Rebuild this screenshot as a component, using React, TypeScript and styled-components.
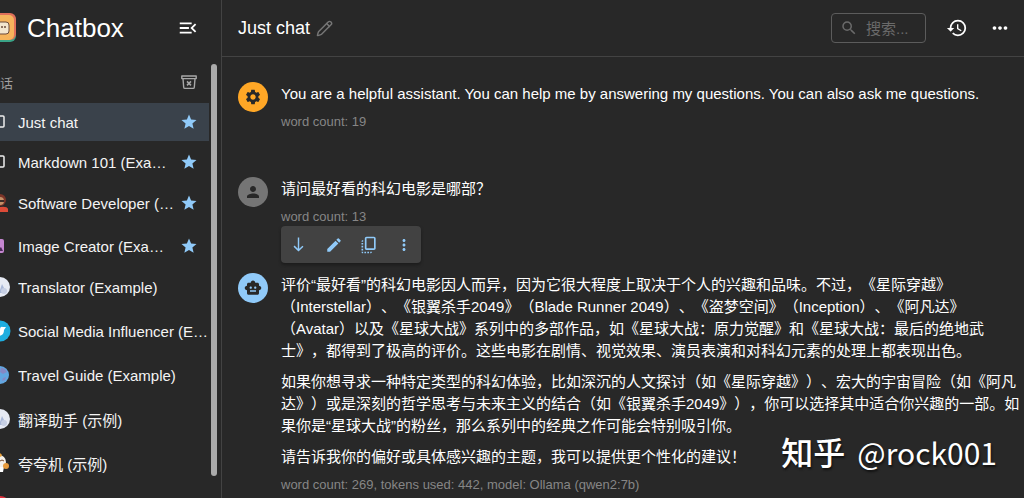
import React from 'react';
import styled, { createGlobalStyle } from 'styled-components';
import { Pencil } from 'lucide-react';
import {
  MdMenuOpen, MdStar, MdSearch, MdHistory, MdMoreHoriz, MdMoreVert, MdEdit,
  MdSouth, MdCopyAll, MdSettings, MdPerson, MdSmartToy,
} from 'react-icons/md';

const GlobalStyle = createGlobalStyle`
  * { box-sizing: border-box; }
  html, body, #root { height: 100%; }
  body {
    margin: 0;
    overflow: hidden;
    background: #282828;
    color: #fff;
    font-family: "Liberation Sans", "Noto Sans CJK SC", sans-serif;
    font-size: 15px;
    text-spacing-trim: space-all;
  }
  p, h1, h2, ul { margin: 0; padding: 0; font-weight: 400; }
`;

const Shell = styled.div`
  display: flex;
  height: 100%;
  overflow: hidden;
`;

const Sidebar = styled.aside`
  display: flex;
  flex-direction: column;
  flex: 0 0 222px;
  overflow: hidden;
  border-right: 1px solid #434343;
`;

const Brand = styled.header`
  display: flex;
  align-items: center;
  flex: 0 0 56px;
  padding-right: 22px;
`;

const BrandName = styled.h1`
  flex: 1;
  margin-left: 11px;
  font-size: 26px;
  line-height: 32px;
`;

const IconButton = styled.button<{ $color?: string }>`
  display: flex;
  align-items: center;
  justify-content: center;
  padding: 0;
  border: 0;
  background: none;
  color: ${(p) => p.$color ?? '#fff'};
`;

const SidebarBody = styled.div`
  display: flex;
  flex: 1;
  min-height: 0;
`;

const SessionPane = styled.nav`
  flex: 1;
  min-width: 0;
  padding-top: 6px;
`;

const PaneHeading = styled.div`
  display: flex;
  align-items: center;
  justify-content: space-between;
  height: 40px;
  padding-right: 12px;
  color: #a0a0a0;
  font-size: 13px;
`;

const SessionList = styled.ul`
  list-style: none;
`;

const SessionLink = styled.a<{ $active?: boolean; $tall?: boolean; $starred?: boolean }>`
  display: flex;
  align-items: center;
  height: ${(p) => (p.$tall ? 44 : 40)}px;
  padding: 0 ${(p) => (p.$starred ? 10 : 0)}px ${(p) => (p.$tall ? 2 : 0)}px 0;
  border: solid transparent;
  border-width: 1px 0;
  background: ${(p) => (p.$active ? '#3a424b' : 'transparent')};
  background-clip: padding-box;
  color: #f4f4f4;
  text-decoration: none;
`;

const SessionIcon = styled.span`
  display: flex;
  flex: 0 0 22px;
  justify-content: center;
  margin: 0 7px 0 -11px;
`;

const SessionName = styled.span`
  flex: 1;
  overflow: hidden;
  white-space: nowrap;
  text-overflow: ellipsis;
`;

const StarSlot = styled.span`
  display: flex;
  justify-content: center;
  flex: 0 0 20px;
  margin-left: 4px;
  color: #90caf9;
`;

const ScrollTrack = styled.div`
  display: flex;
  flex: 0 0 12px;
  padding: 8px 4px 22px 2px;
`;

const ScrollThumb = styled.div`
  flex: 1;
  border-radius: 3px;
  background: #aaa;
`;

const Main = styled.main`
  display: flex;
  flex-direction: column;
  flex: 1;
  min-width: 0;
`;

const TopBar = styled.header`
  display: flex;
  align-items: center;
  flex: 0 0 57px;
  padding: 0 13px 0 16px;
  border-bottom: 1px solid #434343;
`;

const ChatTitle = styled.h2`
  margin-right: 6px;
  font-size: 18px;
  line-height: 24px;
`;

const Spacer = styled.div`
  flex: 1;
`;

const SearchBox = styled.label`
  display: flex;
  align-items: center;
  gap: 8px;
  width: 95px;
  height: 30px;
  margin-right: 20px;
  padding: 0 8px;
  border: 1px solid #5c5c5c;
  border-radius: 4px;
  color: #6a6a6a;
`;

const SearchInput = styled.input`
  flex: 1;
  min-width: 0;
  padding: 0;
  border: 0;
  outline: 0;
  background: none;
  color: #fff;
  font: inherit;
  &::placeholder { color: #6a6a6a; opacity: 1; }
`;

const TopActions = styled.div`
  display: flex;
  gap: 21px;
`;

const Thread = styled.div`
  flex: 1;
  min-height: 0;
  padding: 25px 4px 0 16px;
`;

const Message = styled.article<{ $gap?: number }>`
  display: flex;
  gap: 13px;
  margin-bottom: ${(p) => p.$gap ?? 0}px;
`;

const Avatar = styled.div<{ $bg: string }>`
  display: flex;
  align-items: center;
  justify-content: center;
  flex: 0 0 30px;
  height: 30px;
  border-radius: 50%;
  background: ${(p) => p.$bg};
  color: #282828;
`;

const MessageBody = styled.div`
  flex: 1;
  min-width: 0;
  padding-top: 1px;
`;

const Paragraph = styled.p`
  margin-bottom: 9px;
  line-height: 22px;
  white-space: nowrap;
`;

const Meta = styled.div`
  margin-top: -1px;
  color: #868686;
  font-size: 13px;
  line-height: 18px;
`;

const Toolbar = styled.div`
  display: inline-flex;
  align-items: center;
  width: 140px;
  height: 37px;
  border-radius: 4px;
  background: #424242;
  box-shadow: 0 2px 3px #1c1c1c;
`;

const ToolButton = styled(IconButton)`
  flex: 1;
`;

const Watermark = styled.div`
  position: absolute;
  right: 27px;
  bottom: 24px;
  display: flex;
  align-items: baseline;
  gap: 12px;
  font-family: "Noto Sans CJK SC", sans-serif;
  font-size: 30px;
  line-height: 44px;
  text-shadow: 1px 2px 2px #111;
`;

const SiteName = styled.span`
  font-size: 32px;
  font-weight: 500;
`;

function BrandLogo() {
  return (
    <svg width="16" height="30" viewBox="14 0 16 30" aria-hidden="true">
      <rect x="0" y="1" width="30" height="28" rx="6" fill="#3aa387" />
      <rect x="0" y="0" width="30" height="27" rx="6" fill="#e0705a" />
      <rect x="0" y="2" width="28" height="25" rx="5" fill="#f6b45c" />
      <rect x="4" y="9" width="19" height="12" rx="3" fill="#f3e6cf" stroke="#6b4b3c" />
      <circle cx="16" cy="14" r="1" fill="#6b4b3c" />
      <circle cx="19" cy="14" r="1" fill="#6b4b3c" />
    </svg>
  );
}

function ArchiveIcon() {
  return (
    <svg width="16" height="16" viewBox="0 0 16 16" fill="none" stroke="#a8a8a8" strokeWidth="1.4" strokeLinejoin="round" aria-hidden="true">
      <path d="M.8 2h14.4v2.6H.8zM2 4.8l.7 8.4q.1 1.2 1.2 1.2h8.2q1.1 0 1.2-1.2l.7-8.4" />
      <path d="M6 7.4l4 4M10 7.4l-4 4" strokeWidth="1.5" />
    </svg>
  );
}

type IconKind = 'chat' | 'dev' | 'image' | 'translate' | 'bird' | 'globe' | 'cheer' | 'red';

function SessionGlyph({ kind }: { kind: IconKind }) {
  return (
    <svg width="22" height="22" viewBox="0 0 22 22" aria-hidden="true">
      {kind === 'chat' && (
        <path d="M3 6q0-1 1-1h10q1 0 1 1v9q0 1-1 1H6l-3 3z" fill="none" stroke="#eee" strokeWidth="1.5" />
      )}
      {kind === 'dev' && (
        <>
          <circle cx="11" cy="8" r="6" fill="#7c3428" />
          <circle cx="11" cy="9" r="4" fill="#c49068" />
          <path d="M8 8h7v2H8z" fill="#3c2c28" />
          <path d="M3 20q1-5 8-5 7-1 8 2v3z" fill="#dc4b38" />
        </>
      )}
      {kind === 'image' && (
        <>
          <rect x="1" y="4" width="14" height="14" rx="2" fill="#c486d0" />
          <path d="M3 16l4-5 3 3 2-2 2 4z" fill="#4b2858" />
        </>
      )}
      {kind === 'translate' && (
        <>
          <circle cx="11" cy="11" r="10" fill="#e6eaf4" />
          <path d="M10 17l3-9 3 6v3z" fill="#a9b8d8" />
          <circle cx="15" cy="15" r="3" fill="#c6cfe4" />
        </>
      )}
      {kind === 'bird' && (
        <>
          <circle cx="11" cy="11" r="10.5" fill="#1eaee0" />
          <path d="M5 8q3 3 6 2 0-4 3-3l3 0-2 3q0 6-6 6-3 0-5-2 2 0 3-1-2-2-2-5z" fill="#fff" />
        </>
      )}
      {kind === 'globe' && (
        <>
          <circle cx="11" cy="11" r="9" fill="#62a6e0" />
          <path d="M12 4q4 0 6 4l-4 2-3-2zM14 14l3-1-1 3-3 1z" fill="#8588c4" />
        </>
      )}
      {kind === 'cheer' && (
        <>
          <circle cx="10" cy="10" r="7" fill="#f4f0ea" />
          <path d="M10 2q1-2 3 1l-1 2-2-1z" fill="#e8a13a" />
          <path d="M11 9q2-2 4 0" stroke="#7a4a2a" fill="none" />
          <path d="M6 15h9l-1 5H6z" fill="#fff" />
          <circle cx="17" cy="14" r="3" fill="#e79a3c" />
        </>
      )}
      {kind === 'red' && <circle cx="11" cy="11" r="11" fill="#e0303c" />}
    </svg>
  );
}

const sessions: { name: string; kind: IconKind; starred?: boolean; active?: boolean; tall?: boolean }[] = [
  { name: 'Just chat', kind: 'chat', starred: true, active: true },
  { name: 'Markdown 101 (Example)', kind: 'chat', starred: true },
  { name: 'Software Developer (Example)', kind: 'dev', starred: true, tall: true },
  { name: 'Image Creator (Example)', kind: 'image', starred: true },
  { name: 'Translator (Example)', kind: 'translate', tall: true },
  { name: 'Social Media Influencer (Example)', kind: 'bird', tall: true },
  { name: 'Travel Guide (Example)', kind: 'globe', tall: true },
  { name: '翻译助手 (示例)', kind: 'translate', tall: true },
  { name: '夸夸机 (示例)', kind: 'cheer', tall: true },
  { name: '', kind: 'red', tall: true },
];

const reply = [
  [
    '评价“最好看”的科幻电影因人而异，因为它很大程度上取决于个人的兴趣和品味。不过，《星际穿越》',
    '（Interstellar）、《银翼杀手2049》（Blade Runner 2049）、《盗梦空间》（Inception）、《阿凡达》',
    '（Avatar）以及《星球大战》系列中的多部作品，如《星球大战：原力觉醒》和《星球大战：最后的绝地武',
    '士》，都得到了极高的评价。这些电影在剧情、视觉效果、演员表演和对科幻元素的处理上都表现出色。',
  ],
  [
    '如果你想寻求一种特定类型的科幻体验，比如深沉的人文探讨（如《星际穿越》）、宏大的宇宙冒险（如《阿凡',
    '达》）或是深刻的哲学思考与未来主义的结合（如《银翼杀手2049》），你可以选择其中适合你兴趣的一部。如',
    '果你是“星球大战”的粉丝，那么系列中的经典之作可能会特别吸引你。',
  ],
  ['请告诉我你的偏好或具体感兴趣的主题，我可以提供更个性化的建议！'],
];

export default function App() {
  return (
    <>
      <GlobalStyle />
      <Shell>
        <Sidebar>
          <Brand>
            <BrandLogo />
            <BrandName>Chatbox</BrandName>
            <IconButton aria-label="Collapse sidebar"><MdMenuOpen size={22} /></IconButton>
          </Brand>
          <SidebarBody>
            <SessionPane>
              <PaneHeading>
                <span>话</span>
                <IconButton aria-label="Archive"><ArchiveIcon /></IconButton>
              </PaneHeading>
              <SessionList>
                {sessions.map((s) => (
                  <li key={s.kind + s.name}>
                    <SessionLink href="#" $active={s.active} $tall={s.tall} $starred={s.starred}>
                      <SessionIcon><SessionGlyph kind={s.kind} /></SessionIcon>
                      <SessionName>{s.name}</SessionName>
                      {s.starred && <StarSlot><MdStar size={18} /></StarSlot>}
                    </SessionLink>
                  </li>
                ))}
              </SessionList>
            </SessionPane>
            <ScrollTrack><ScrollThumb /></ScrollTrack>
          </SidebarBody>
        </Sidebar>
        <Main>
          <TopBar>
            <ChatTitle>Just chat</ChatTitle>
            <IconButton aria-label="Rename" $color="#777"><Pencil size={17} strokeWidth={2} /></IconButton>
            <Spacer />
            <SearchBox>
              <MdSearch size={18} />
              <SearchInput aria-label="搜索" placeholder="搜索..." />
            </SearchBox>
            <TopActions>
              <IconButton aria-label="History"><MdHistory size={22} /></IconButton>
              <IconButton aria-label="More"><MdMoreHoriz size={22} /></IconButton>
            </TopActions>
          </TopBar>
          <Thread>
            <Message $gap={46}>
              <Avatar $bg="#ffa726"><MdSettings size={18} /></Avatar>
              <MessageBody>
                <Paragraph>You are a helpful assistant. You can help me by answering my questions. You can also ask me questions.</Paragraph>
                <Meta>word count: 19</Meta>
              </MessageBody>
            </Message>
            <Message $gap={10}>
              <Avatar $bg="#757575"><MdPerson size={18} /></Avatar>
              <MessageBody>
                <Paragraph>请问最好看的科幻电影是哪部？</Paragraph>
                <Meta>word count: 13</Meta>
                <Toolbar>
                  <ToolButton $color="#90caf9" aria-label="Scroll down"><MdSouth size={17} /></ToolButton>
                  <ToolButton $color="#90caf9" aria-label="Edit"><MdEdit size={18} /></ToolButton>
                  <ToolButton $color="#90caf9" aria-label="Copy"><MdCopyAll size={20} /></ToolButton>
                  <ToolButton $color="#90caf9" aria-label="More actions"><MdMoreVert size={18} /></ToolButton>
                </Toolbar>
              </MessageBody>
            </Message>
            <Message>
              <Avatar $bg="#90caf9"><MdSmartToy size={18} /></Avatar>
              <MessageBody>
                {reply.map((lines) => (
                  <Paragraph key={lines[0]}>
                    {lines.map((line, i) => (
                      <React.Fragment key={line}>{i > 0 && <br />}{line}</React.Fragment>
                    ))}
                  </Paragraph>
                ))}
                <Meta>word count: 269, tokens used: 442, model: Ollama (qwen2:7b)</Meta>
              </MessageBody>
            </Message>
          </Thread>
        </Main>
      </Shell>
      <Watermark><SiteName>知乎</SiteName><span>@rock001</span></Watermark>
    </>
  );
}
